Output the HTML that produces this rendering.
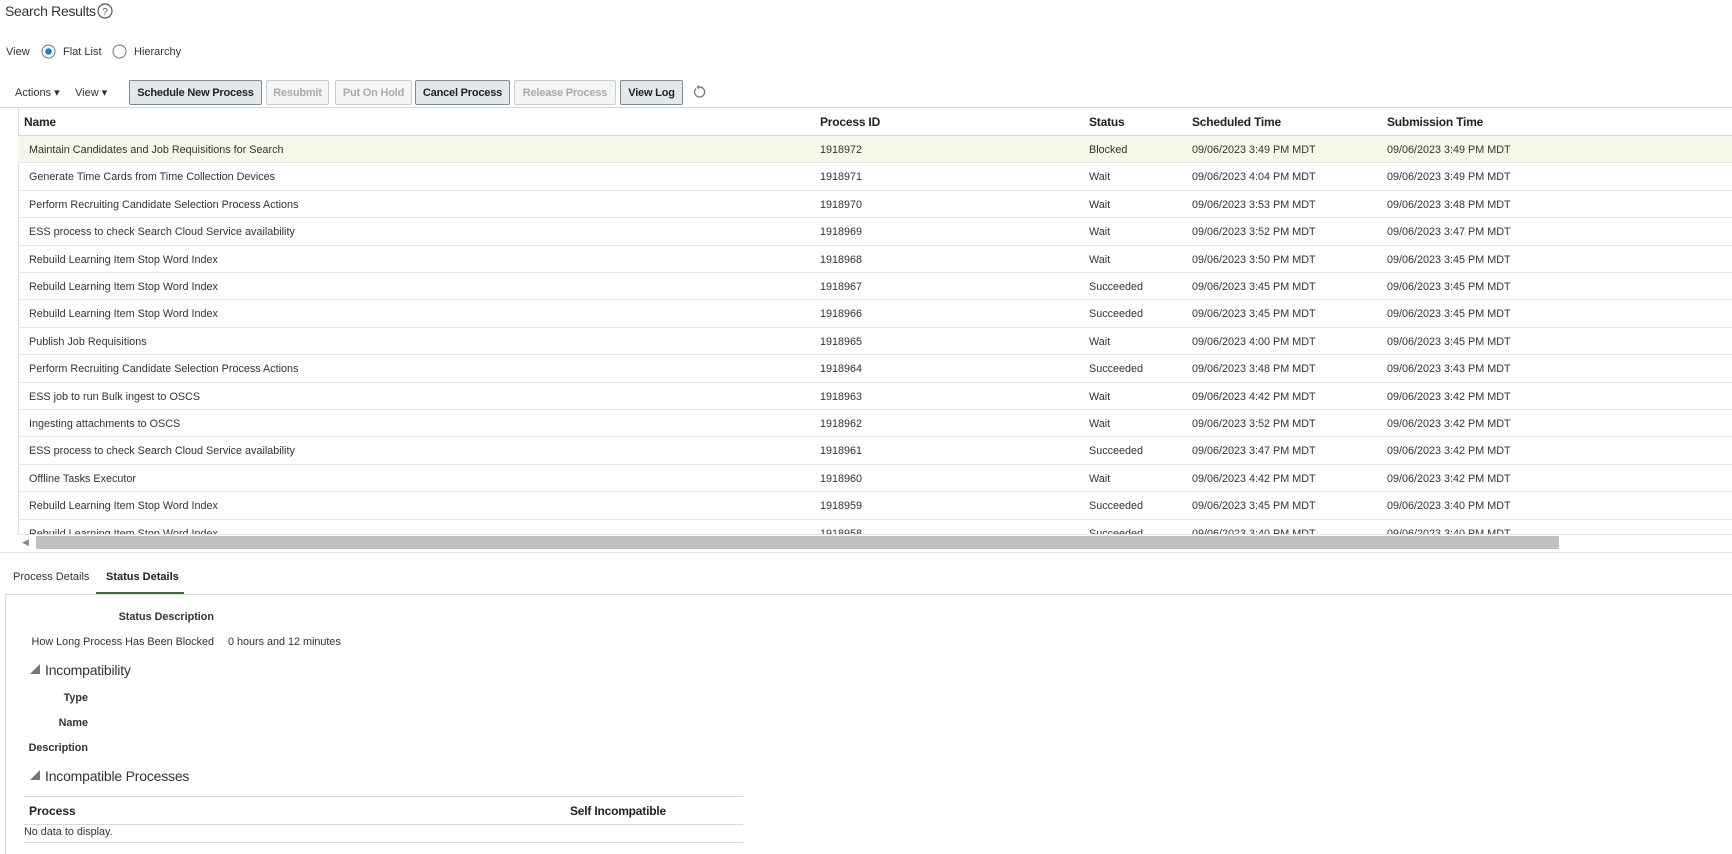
<!DOCTYPE html>
<html><head><meta charset="utf-8"><style>
*{box-sizing:border-box;margin:0;padding:0}
body{width:1732px;height:852px;overflow:hidden;background:#fff;font-family:"Liberation Sans",Arial,sans-serif;color:#333;position:relative;font-size:12px}
.a{position:absolute;white-space:nowrap}
.btn{position:absolute;top:80px;height:25px;border:1px solid #c4ced7;border-radius:2px;background:#f5f5f5;color:#aaa;font-size:11px;letter-spacing:-0.2px;font-weight:bold;line-height:24px;text-align:center;white-space:nowrap}
.btn.on{background:#e4e8ea;border-color:#7d8b96;color:#222}
.row{position:absolute;left:18px;width:1714px;height:27.4px;border-bottom:1px solid #e6e6e6}
.row span{position:absolute;top:8px;font-size:10.8px;color:#333;white-space:nowrap}
.hd span{position:absolute;top:7px;font-weight:bold;font-size:12px;color:#222;letter-spacing:-0.2px}
.lbl{position:absolute;font-size:10.8px;color:#333;text-align:right;white-space:nowrap}
</style></head><body>
<div class="a" style="left:5px;top:3px;font-size:14px;letter-spacing:-0.3px;color:#333">Search Results</div>
<svg class="a" style="left:97px;top:3px" width="16" height="16" viewBox="0 0 16 16"><circle cx="8" cy="8" r="7" fill="none" stroke="#555" stroke-width="1.2"/><text x="8" y="12" font-size="10" text-anchor="middle" fill="#555" font-family="Liberation Sans">?</text></svg>

<div class="a" style="left:6px;top:46px;font-size:11px">View</div>
<svg class="a" style="left:41px;top:44px" width="15" height="15"><circle cx="7.5" cy="7.5" r="6.5" fill="#fff" stroke="#777"/><circle cx="7.5" cy="7.5" r="3.3" fill="#1f7fd6"/></svg>
<div class="a" style="left:63px;top:46px;font-size:11px">Flat List</div>
<svg class="a" style="left:112px;top:44px" width="15" height="15"><circle cx="7.5" cy="7.5" r="6.5" fill="#fff" stroke="#777"/></svg>
<div class="a" style="left:134px;top:46px;font-size:11px">Hierarchy</div>

<div class="a" style="left:15px;top:86px;font-size:11px">Actions ▾</div>
<div class="a" style="left:75px;top:86px;font-size:11px">View ▾</div>
<div class="btn on" style="left:129px;width:133px">Schedule New Process</div>
<div class="btn" style="left:266px;width:63px">Resubmit</div>
<div class="btn" style="left:335px;width:77px">Put On Hold</div>
<div class="btn on" style="left:415px;width:95px">Cancel Process</div>
<div class="btn" style="left:514px;width:102px">Release Process</div>
<div class="btn on" style="left:620px;width:63px">View Log</div>
<svg class="a" style="left:692px;top:85px" width="14" height="14" viewBox="0 0 14 14"><path d="M4 3.5A5 5 0 1 0 7 2" fill="none" stroke="#777" stroke-width="1.3"/><path d="M7 0v4.5L4.5 2z" fill="#777"/></svg>

<div class="a" style="left:0;top:107px;width:1732px;height:1px;background:#d6dadd"></div>
<div class="a" style="left:18px;top:108px;width:1px;height:440px;background:#e0e0e0"></div>
<div class="row hd" style="top:108px;height:28px;border-bottom:1px solid #d6dadd">
<span style="left:6px">Name</span><span style="left:802px">Process ID</span><span style="left:1071px">Status</span><span style="left:1174px">Scheduled Time</span><span style="left:1369px">Submission Time</span></div>
<div id="rows"></div>
<script>
var d=[["Maintain Candidates and Job Requisitions for Search","1918972","Blocked","09/06/2023 3:49 PM MDT","09/06/2023 3:49 PM MDT"],
["Generate Time Cards from Time Collection Devices","1918971","Wait","09/06/2023 4:04 PM MDT","09/06/2023 3:49 PM MDT"],
["Perform Recruiting Candidate Selection Process Actions","1918970","Wait","09/06/2023 3:53 PM MDT","09/06/2023 3:48 PM MDT"],
["ESS process to check Search Cloud Service availability","1918969","Wait","09/06/2023 3:52 PM MDT","09/06/2023 3:47 PM MDT"],
["Rebuild Learning Item Stop Word Index","1918968","Wait","09/06/2023 3:50 PM MDT","09/06/2023 3:45 PM MDT"],
["Rebuild Learning Item Stop Word Index","1918967","Succeeded","09/06/2023 3:45 PM MDT","09/06/2023 3:45 PM MDT"],
["Rebuild Learning Item Stop Word Index","1918966","Succeeded","09/06/2023 3:45 PM MDT","09/06/2023 3:45 PM MDT"],
["Publish Job Requisitions","1918965","Wait","09/06/2023 4:00 PM MDT","09/06/2023 3:45 PM MDT"],
["Perform Recruiting Candidate Selection Process Actions","1918964","Succeeded","09/06/2023 3:48 PM MDT","09/06/2023 3:43 PM MDT"],
["ESS job to run Bulk ingest to OSCS","1918963","Wait","09/06/2023 4:42 PM MDT","09/06/2023 3:42 PM MDT"],
["Ingesting attachments to OSCS","1918962","Wait","09/06/2023 3:52 PM MDT","09/06/2023 3:42 PM MDT"],
["ESS process to check Search Cloud Service availability","1918961","Succeeded","09/06/2023 3:47 PM MDT","09/06/2023 3:42 PM MDT"],
["Offline Tasks Executor","1918960","Wait","09/06/2023 4:42 PM MDT","09/06/2023 3:42 PM MDT"],
["Rebuild Learning Item Stop Word Index","1918959","Succeeded","09/06/2023 3:45 PM MDT","09/06/2023 3:40 PM MDT"],
["Rebuild Learning Item Stop Word Index","1918958","Succeeded","09/06/2023 3:40 PM MDT","09/06/2023 3:40 PM MDT"]];
var x=[11,802,1071,1174,1369],h="";
d.forEach(function(r,i){h+='<div class="row" style="top:'+(136+i*27.4)+'px;'+(i==0?'background:#f7f7ea':'')+'">';
r.forEach(function(c,j){h+='<span style="left:'+x[j]+'px">'+c+'</span>'});h+='</div>'});
document.getElementById('rows').innerHTML=h;
</script>
<div class="a" style="left:18px;top:534px;width:1714px;height:18px;background:#fff;border-top:1px solid #e6e6e6"></div>
<div class="a" style="left:22px;top:536px;width:14px;height:13px;color:#888;font-size:9px;line-height:13px">◀</div>
<div class="a" style="left:36px;top:536px;width:1523px;height:13px;background:#c1c1c1"></div>
<div class="a" style="left:0;top:552px;width:1732px;height:1px;background:#e0e0e0"></div>

<div class="a" style="left:13px;top:571px;font-size:11px">Process Details</div>
<div class="a" style="left:106px;top:571px;font-size:11px;font-weight:bold;color:#222">Status Details</div>
<div class="a" style="left:96px;top:592px;width:88px;height:2px;background:#3f6b3a"></div>
<div class="a" style="left:5px;top:594px;width:1727px;height:260px;border-top:1px solid #d6dadd;border-left:1px solid #d6dadd"></div>

<div class="lbl" style="left:0;width:214px;top:611px;font-weight:bold">Status Description</div>
<div class="lbl" style="left:0;width:214px;top:636px">How Long Process Has Been Blocked</div>
<div class="a" style="left:228px;top:636px;font-size:10.8px">0 hours and 12 minutes</div>
<svg class="a" style="left:30px;top:664px" width="11" height="11"><path d="M10 0V10H0z" fill="#777"/></svg>
<div class="a" style="left:45px;top:662px;font-size:14px;letter-spacing:-0.2px">Incompatibility</div>
<div class="lbl" style="left:0;width:88px;top:692px;font-weight:bold">Type</div>
<div class="lbl" style="left:0;width:88px;top:717px;font-weight:bold">Name</div>
<div class="lbl" style="left:0;width:88px;top:742px;font-weight:bold">Description</div>
<svg class="a" style="left:30px;top:770px" width="11" height="11"><path d="M10 0V10H0z" fill="#777"/></svg>
<div class="a" style="left:45px;top:768px;font-size:14px;letter-spacing:-0.2px">Incompatible Processes</div>
<div class="a" style="left:24px;top:796px;width:719px;height:1px;background:#d6dadd"></div>
<div class="a" style="left:29px;top:804px;font-size:12px;font-weight:bold;color:#222">Process</div>
<div class="a" style="left:570px;top:804px;font-size:12px;font-weight:bold;color:#222;letter-spacing:-0.2px">Self Incompatible</div>
<div class="a" style="left:24px;top:824px;width:719px;height:1px;background:#d6dadd"></div>
<div class="a" style="left:24px;top:826px;font-size:10.8px">No data to display.</div>
<div class="a" style="left:24px;top:842px;width:719px;height:1px;background:#d6dadd"></div>
</body></html>
